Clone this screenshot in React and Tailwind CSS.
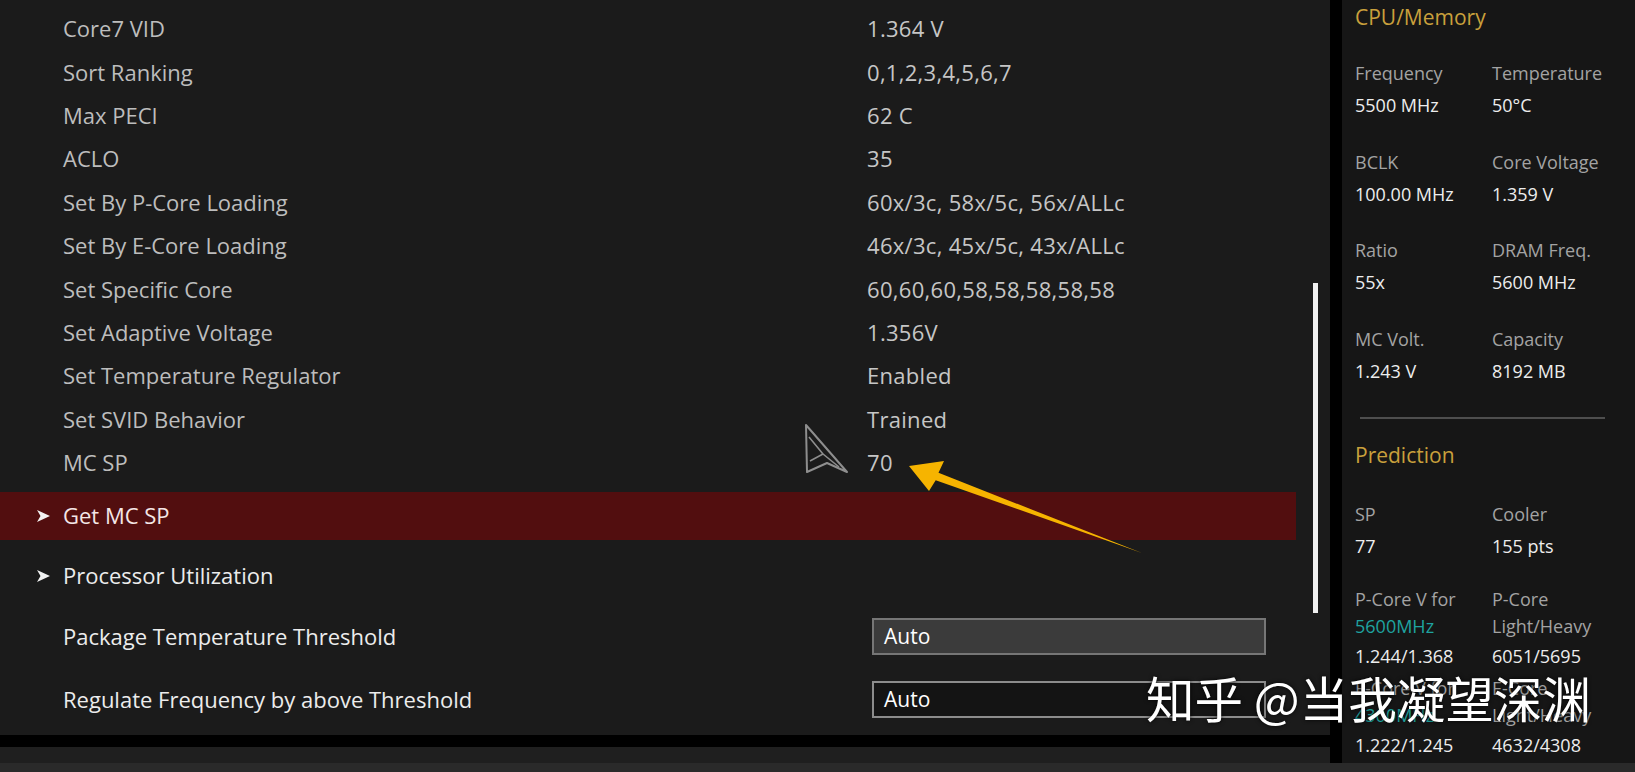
import React from 'react';

const rows = [
  ['Core7 VID', '1.364 V'],
  ['Sort Ranking', '0,1,2,3,4,5,6,7'],
  ['Max PECI', '62 C'],
  ['ACLO', '35'],
  ['Set By P-Core Loading', '60x/3c, 58x/5c, 56x/ALLc'],
  ['Set By E-Core Loading', '46x/3c, 45x/5c, 43x/ALLc'],
  ['Set Specific Core', '60,60,60,58,58,58,58,58'],
  ['Set Adaptive Voltage', '1.356V'],
  ['Set Temperature Regulator', 'Enabled'],
  ['Set SVID Behavior', 'Trained'],
  ['MC SP', '70'],
];

const cpuStats = [
  ['Frequency', '5500 MHz', 'Temperature', '50°C'],
  ['BCLK', '100.00 MHz', 'Core Voltage', '1.359 V'],
  ['Ratio', '55x', 'DRAM Freq.', '5600 MHz'],
  ['MC Volt.', '1.243 V', 'Capacity', '8192 MB'],
];

const Chevron = () => (
  <svg width="13" height="12" viewBox="0 0 13 12">
    <path d="M0 0 L13 6 L0 12 L3.5 6 Z" fill="#f2f2f2" />
  </svg>
);

const InfoRow = ({ label, value }) => (
  <div className="flex h-[43.4px] items-center">
    <div className="w-[867px] pl-[63px] text-[22px] text-[#bdbdbd]">{label}</div>
    <div className="text-[22px] tracking-[0.3px] text-[#c6c6c6]">{value}</div>
  </div>
);

const SubMenu = ({ label, active, className }) => (
  <div className={`flex items-center ${active ? 'bg-[#520e0f]' : ''} ${className}`}>
    <div className="w-[63px] pl-[37px]">
      <Chevron />
    </div>
    <span className={`text-[22px] ${active ? 'text-[#f4e6e6]' : 'text-[#ececec]'}`}>{label}</span>
  </div>
);

const SettingRow = ({ label, selected, className }) => (
  <div className={`flex h-[50px] items-center ${className}`}>
    <div className="w-[872px] pl-[63px] text-[22px] text-[#ececec]">{label}</div>
    <div
      className={`flex h-[37px] w-[394px] items-center border-2 pl-[10px] text-[21px] text-white ${
        selected ? 'border-[#767676] bg-[#3b3b3b]' : 'border-[#8c8c8c] bg-[#141414]'
      }`}
    >
      Auto
    </div>
  </div>
);

const Stat = ({ label, value }) => (
  <div>
    <div className="text-[18px] leading-[32px] text-[#a3a3a3]">{label}</div>
    <div className="text-[18px] font-medium leading-[32px] text-[#ededed]">{value}</div>
  </div>
);

const PredStat = ({ l1, l2, teal, value }) => (
  <div>
    <div className="text-[18px] leading-[27px] text-[#a3a3a3]">{l1}</div>
    <div className={`text-[18px] leading-[27px] ${teal ? 'text-[#1fa3a0]' : 'text-[#a3a3a3]'}`}>{l2}</div>
    <div className="text-[18px] font-medium leading-[32px] text-[#ededed]">{value}</div>
  </div>
);

const Sidebar = () => (
  <div className="h-full flex-1 overflow-hidden bg-[#161616] pl-[13px]">
    <div className="h-[34px] text-[21px] leading-[34px] text-[#c9a03c]">CPU/Memory</div>
    <div className="mt-[23px] flex flex-col gap-[24.7px]">
      {cpuStats.map(([a, av, b, bv]) => (
        <div key={a} className="grid grid-cols-[137px_1fr]">
          <Stat label={a} value={av} />
          <Stat label={b} value={bv} />
        </div>
      ))}
    </div>
    <div className="ml-[5px] mt-[30px] h-[2px] w-[245px] bg-[#4e4e4e]" />
    <div className="mt-[19px] h-[34px] text-[21px] leading-[34px] text-[#c9a03c]">Prediction</div>
    <div className="mt-[26px] grid grid-cols-[137px_1fr]">
      <Stat label="SP" value="77" />
      <Stat label="Cooler" value="155 pts" />
    </div>
    <div className="mt-[24px] grid grid-cols-[137px_1fr]">
      <PredStat l1="P-Core V for" l2="5600MHz" teal value="1.244/1.368" />
      <PredStat l1="P-Core" l2="Light/Heavy" value="6051/5695" />
    </div>
    <div className="mt-[3px] grid grid-cols-[137px_1fr]">
      <PredStat l1="E-Core V for" l2="4300MHz" teal value="1.222/1.245" />
      <PredStat l1="E-Core" l2="Light/Heavy" value="4632/4308" />
    </div>
  </div>
);

export default function App() {
  return (
    <div
      className="relative flex h-[772px] w-[1635px] flex-col overflow-hidden bg-[#2a2a2a]"
      style={{ fontFamily: '"Open Sans", "Noto Sans", sans-serif' }}
    >
      <div className="flex h-[763px]">
        <div className="flex w-[1330px] flex-col">
          <div className="flex h-[735px] bg-[#1b1b1b]">
            <div className="w-[1296px] pt-[7px]">
              {rows.map(([l, v]) => (
                <InfoRow key={l} label={l} value={v} />
              ))}
              <SubMenu label="Get MC SP" active className="mt-[7.6px] h-[48px]" />
              <SubMenu label="Processor Utilization" className="h-[72px]" />
              <SettingRow label="Package Temperature Threshold" selected />
              <SettingRow label="Regulate Frequency by above Threshold" className="mt-[13px]" />
            </div>
            <div className="flex-1 pl-[17px] pt-[283px]">
              <div className="h-[330px] w-[5px] bg-[#f0f0f0]" />
            </div>
          </div>
          <div className="h-[12px] bg-black" />
          <div className="flex-1 bg-[#1f1f1f]" />
        </div>
        <div className="w-[12px] bg-black" />
        <Sidebar />
      </div>
      <div className="flex-1 bg-[#2a2a2a]" />

      {/* mouse pointer */}
      <svg className="absolute left-[800px] top-[420px]" width="52" height="56" viewBox="0 0 52 56">
        <path d="M6 5 L47 52 L27 43 L7 52 Z" fill="none" stroke="#8e8e8e" strokeWidth="2" strokeLinejoin="round" />
        <path d="M9 17 L23 34 L10 41 M23 34 L39 47" fill="none" stroke="#8e8e8e" strokeWidth="1.6" />
      </svg>

      {/* annotation arrow */}
      <svg className="absolute left-0 top-0" width="1635" height="772" viewBox="0 0 1635 772">
        <polygon
          points="909,466 944,461 938.5,472.8 1142,553 935.7,480.2 929,491"
          fill="#f6b400"
        />
      </svg>

      <div
        className="absolute left-[1146px] top-[673px] whitespace-nowrap text-[48.5px] leading-none text-white [text-shadow:0_0_4px_rgba(0,0,0,0.85)]"
        style={{ fontFamily: '"Noto Sans CJK SC", sans-serif' }}
      >
        知乎 @当我凝望深渊
      </div>
    </div>
  );
}
